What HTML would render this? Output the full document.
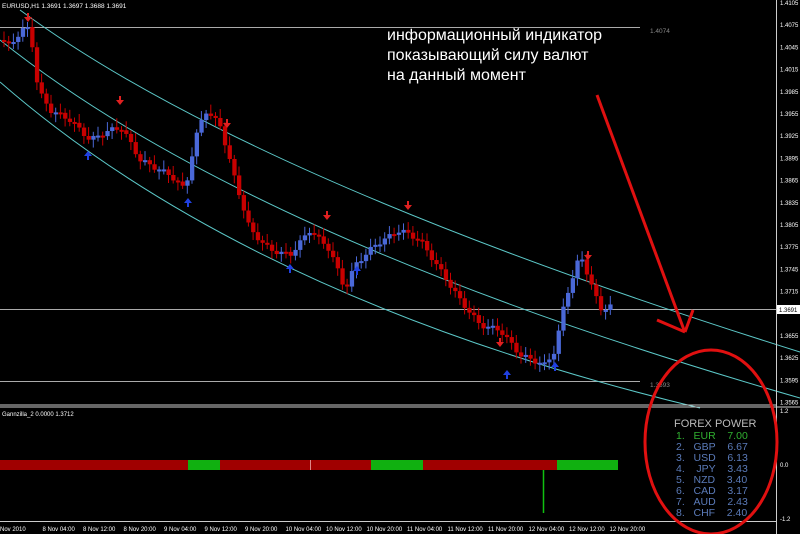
<!DOCTYPE html>
<html><head><meta charset="utf-8"><style>
body{margin:0;background:#000;width:800px;height:534px;overflow:hidden;font-family:"Liberation Sans",sans-serif}
svg{display:block}
</style></head><body>
<svg id="s" width="800" height="534" xmlns="http://www.w3.org/2000/svg" font-family="Liberation Sans, sans-serif">
<rect width="800" height="534" fill="#000"/>
<line x1="0" y1="27.5" x2="640" y2="27.5" stroke="#aaa" stroke-width="1"/>
<text x="650" y="33" fill="#888" font-size="6.5">1.4074</text>
<line x1="0" y1="309.5" x2="776" y2="309.5" stroke="#aaa"/>
<line x1="0" y1="381.5" x2="640" y2="381.5" stroke="#aaa"/>
<text x="650" y="387" fill="#888" font-size="6.5">1.3593</text>
<path d="M20,10 Q250,180 800,352" stroke="#5cc8c8" fill="none" stroke-width="1"/>
<path d="M0,40 Q250,240 800,398" stroke="#5cc8c8" fill="none" stroke-width="1"/>
<path d="M0,82 Q250,300 700,408" stroke="#5cc8c8" fill="none" stroke-width="1"/>
<g id="c"></g>
<text x="2" y="8" fill="#fff" font-size="6.5">EURUSD,H1  1.3691 1.3697 1.3688 1.3691</text>
<line x1="776.5" y1="0" x2="776.5" y2="534" stroke="#ccc"/>
<g fill="#fff" font-size="6" id="ax"></g>
<rect x="777" y="305" width="23" height="9" fill="#fff"/><text x="779" y="312" fill="#000" font-size="6">1.3691</text>
<line x1="0" y1="405" x2="776" y2="405" stroke="#ccc"/>
<line x1="0" y1="407" x2="800" y2="407" stroke="#ccc"/>
<text x="2" y="416" fill="#fff" font-size="6">Gannzilla_2 0.0000 1.3712</text>
<rect x="0" y="460" width="618" height="10" fill="#a00000"/>
<rect x="188" y="460" width="32" height="10" fill="#10b010"/>
<rect x="371" y="460" width="52" height="10" fill="#10b010"/>
<rect x="557" y="460" width="61" height="10" fill="#10b010"/>
<line x1="310.5" y1="460" x2="310.5" y2="470" stroke="#d88"/>
<line x1="543.5" y1="470" x2="543.5" y2="513" stroke="#10c010" stroke-width="1.5"/>
<text x="780" y="413" fill="#fff" font-size="6">1.2</text>
<text x="780" y="467" fill="#fff" font-size="6">0.0</text>
<text x="780" y="521" fill="#fff" font-size="6">-1.2</text>
<line x1="0" y1="521.5" x2="776" y2="521.5" stroke="#ccc"/>
<g fill="#fff" font-size="6" id="tx"></g>
<text fill="#fff" font-size="16"><tspan x="387" y="40">информационный индикатор</tspan><tspan x="387" y="60">показывающий силу валют</tspan><tspan x="387" y="80">на данный момент</tspan></text>
<line x1="597" y1="95" x2="684" y2="330" stroke="#e01010" stroke-width="3"/>
<line x1="657" y1="320" x2="685" y2="332" stroke="#e01010" stroke-width="3"/>
<line x1="693" y1="310" x2="685" y2="332" stroke="#e01010" stroke-width="3"/>
<text x="674" y="427" fill="#bbb" font-size="11">FOREX POWER</text>
<g font-size="10.5" fill="#5a7ab8">
<text x="676" y="439" fill="#30b030">1.&#160;&#160;&#160;EUR&#160;&#160;&#160;&#160;7.00</text>
<text x="676" y="450">2.&#160;&#160;&#160;GBP&#160;&#160;&#160;&#160;6.67</text>
<text x="676" y="461">3.&#160;&#160;&#160;USD&#160;&#160;&#160;&#160;6.13</text>
<text x="676" y="472">4.&#160;&#160;&#160;&#160;JPY&#160;&#160;&#160;&#160;3.43</text>
<text x="676" y="483">5.&#160;&#160;&#160;NZD&#160;&#160;&#160;&#160;3.40</text>
<text x="676" y="494">6.&#160;&#160;&#160;CAD&#160;&#160;&#160;&#160;3.17</text>
<text x="676" y="505">7.&#160;&#160;&#160;AUD&#160;&#160;&#160;&#160;2.43</text>
<text x="676" y="516">8.&#160;&#160;&#160;CHF&#160;&#160;&#160;&#160;2.40</text>
</g>
<ellipse cx="711" cy="442" rx="66" ry="92" fill="none" stroke="#e01010" stroke-width="3"/>
</svg>
<script>
(function(){
var NS="http://www.w3.org/2000/svg";
function el(p,t,a,txt){var e=document.createElementNS(NS,t);for(var k in a)e.setAttribute(k,String(a[k]));if(txt)e.textContent=txt;document.getElementById(p).appendChild(e);return e;}
var P=[[0,40],[10,45],[22,30],[30,28],[38,90],[50,110],[70,120],[90,140],[110,130],[122,128],[140,160],[170,175],[185,190],[195,140],[205,110],[220,125],[235,180],[250,230],[270,250],[290,255],[310,230],[330,250],[345,290],[355,265],[375,245],[400,230],[420,240],[440,270],[460,300],[480,325],[500,330],[520,355],[545,365],[555,350],[565,300],[580,255],[590,280],[600,310],[612,305]];
function f(x){for(var i=1;i<P.length;i++)if(x<=P[i][0]){var a=P[i-1],b=P[i];return a[1]+(b[1]-a[1])*(x-a[0])/(b[0]-a[0]);}return 305;}
var prev=f(0);
for(var x=2;x<612;x+=4.7){var c=f(x+2)+Math.sin(x*1.7)*2.5;var o=prev;var up=c<o;var col=up?"#4a68d8":"#c80000";
var tp=Math.min(o,c),h=Math.max(Math.abs(c-o),2);
el("c","line",{x1:x+2,x2:x+2,y1:tp-3-Math.abs(Math.sin(x))*6,y2:tp+h+3+Math.abs(Math.cos(x))*5,stroke:col,"stroke-width":1});
el("c","rect",{x:x,y:tp,width:4.3,height:h,fill:col});prev=c;}
[[28,20,1],[120,103,1],[227,126,1],[327,218,1],[408,208,1],[500,345,1],[588,258,1],[88,153,0],[188,200,0],[290,266,0],[357,268,0],[507,372,0],[555,364,0]].forEach(function(a){var x=a[0],y=a[1],c=a[2]?"#e02020":"#2040e0";
if(a[2])el("c","path",{d:"M"+(x-1)+","+(y-7)+"h2v4h3l-4,5l-4,-5h3z",fill:c});else el("c","path",{d:"M"+(x-1)+","+(y+7)+"h2v-4h3l-4,-5l-4,5h3z",fill:c});});
var L=["1.4105","1.4075","1.4045","1.4015","1.3985","1.3955","1.3925","1.3895","1.3865","1.3835","1.3805","1.3775","1.3745","1.3715","1.3685","1.3655","1.3625","1.3595","1.3565"];
L.forEach(function(t,i){if(t!="1.3685")el("ax","text",{x:780,y:5+i*22.2},t);});
var T=["8 Nov 2010","8 Nov 04:00","8 Nov 12:00","8 Nov 20:00","9 Nov 04:00","9 Nov 12:00","9 Nov 20:00","10 Nov 04:00","10 Nov 12:00","10 Nov 20:00","11 Nov 04:00","11 Nov 12:00","11 Nov 20:00","12 Nov 04:00","12 Nov 12:00","12 Nov 20:00"];
T.forEach(function(t,i){el("tx","text",{x:(i==0?-5:2)+i*40.5,y:531},t);});
})();
</script>
</body></html>
